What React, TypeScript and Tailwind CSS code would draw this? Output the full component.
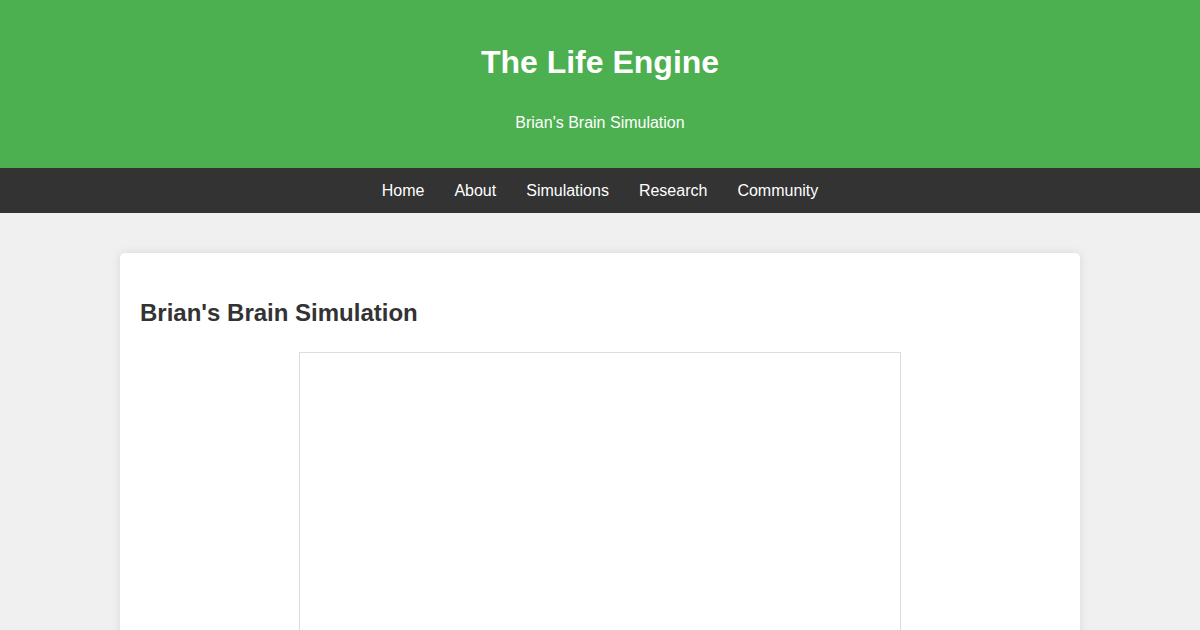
export default function App() {
  return (
    <div className="min-h-screen bg-[#f0f0f0] font-['Liberation_Sans',Arial,sans-serif] text-[#333]">
      <header className="h-[168px] bg-[#4CAF50] text-white flex flex-col items-center">
        <h1 className="mt-[44px] text-[32px] font-bold leading-[37px]">The Life Engine</h1>
        <p className="mt-[33px] text-[16px] leading-[18px]">Brian's Brain Simulation</p>
      </header>
      <nav className="h-[45px] bg-[#333] flex items-center justify-center">
        {["Home", "About", "Simulations", "Research", "Community"].map((l) => (
          <a key={l} href="#" className="px-[15px] text-[16px] text-white leading-[18px]">
            {l}
          </a>
        ))}
      </nav>
      <main className="pt-[40px] pb-[40px]">
        <div className="mx-auto w-[960px] bg-white rounded-[5px] shadow-[0_0_10px_rgba(0,0,0,0.1)] px-[20px] pt-[46px] pb-[20px]">
          <h2 className="text-[24px] font-bold leading-[28px] text-[#333]">Brian's Brain Simulation</h2>
          <div className="mt-[25px] mx-auto w-[602px] h-[402px] border border-[#ddd] bg-white" />
        </div>
      </main>
    </div>
  );
}
